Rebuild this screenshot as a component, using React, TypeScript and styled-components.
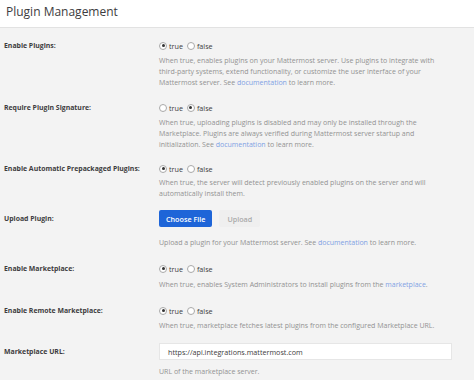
import React from "react";
import styled, { createGlobalStyle } from "styled-components";

const GlobalStyle = createGlobalStyle`
  html, body {
    margin: 0;
    padding: 0;
    background: #f3f3f3;
    font-family: "Open Sans", "Noto Sans", sans-serif;
  }
  * { box-sizing: border-box; }
`;

const Page = styled.div`
  width: 474px;
  height: 380px;
  overflow: hidden;
  background: #f3f3f3;
`;

const Header = styled.div`
  height: 28px;
  background: #ffffff;
  border-bottom: 1px solid #e2e2e2;
  padding: 3px 0 0 6px;
  font-size: 12px;
  line-height: 18px;
  color: #3d3c40;
`;

const Body = styled.div`
  padding: 12px 0 0 4px;
`;

const Row = styled.div<{ $gap: number }>`
  display: grid;
  grid-template-columns: 155px 293px;
  margin-bottom: ${(p) => p.$gap}px;
`;

const Label = styled.div<{ $h: number }>`
  display: flex;
  align-items: center;
  height: ${(p) => p.$h}px;
  font-size: 6.9px;
  font-weight: 700;
  color: #3d3c40;
`;

const Control = styled.div``;

const RadioLine = styled.div`
  display: flex;
  align-items: center;
  height: 11px;
  font-size: 7.2px;
  color: #3d3c40;
`;

const RadioOption = styled.span`
  display: inline-flex;
  align-items: center;
  margin-right: 4px;
`;

const Circle = styled.span<{ $on: boolean }>`
  position: relative;
  width: 8px;
  height: 8px;
  border-radius: 50%;
  border: 1px solid #a9a9a9;
  background: #ffffff;
  margin-right: 2px;

  &::after {
    content: "";
    display: ${(p) => (p.$on ? "block" : "none")};
    position: absolute;
    left: 1.5px;
    top: 1.5px;
    width: 3px;
    height: 3px;
    border-radius: 50%;
    background: #333;
  }
`;

const Help = styled.div<{ $top: number }>`
  margin-top: ${(p) => p.$top}px;
  font-size: 7px;
  line-height: 11px;
  color: #929292;
`;

const Link = styled.a`
  color: #7fa1e3;
  text-decoration: none;
`;

const Buttons = styled.div`
  display: flex;
  gap: 7px;
  height: 17px;
`;

const Button = styled.button<{ $primary?: boolean }>`
  height: 17px;
  padding: 0 ${(p) => (p.$primary ? 7 : 8)}px;
  border: none;
  border-radius: 2px;
  font-family: inherit;
  font-size: 7.2px;
  font-weight: 600;
  color: ${(p) => (p.$primary ? "#ffffff" : "#aaaaaa")};
  background: ${(p) => (p.$primary ? "#1e65d8" : "#efefef")};
`;

const Input = styled.div`
  height: 17px;
  width: 293px;
  background: #ffffff;
  border: 1px solid #e6e6e6;
  padding: 0 8px;
  display: flex;
  align-items: center;
  font-size: 7.2px;
  color: #3d3c40;
`;

const Radios = ({ value }: { value: boolean }) => (
  <RadioLine>
    <RadioOption>
      <Circle $on={value} />
      true
    </RadioOption>
    <RadioOption>
      <Circle $on={!value} />
      false
    </RadioOption>
  </RadioLine>
);

export default function App() {
  return (
    <Page>
      <GlobalStyle />
      <Header>Plugin Management</Header>
      <Body>
        <Row $gap={14}>
          <Label $h={11}>Enable Plugins:</Label>
          <Control>
            <Radios value={true} />
            <Help $top={4}>
              When true, enables plugins on your Mattermost server. Use plugins to integrate with
              third-party systems, extend functionality, or customize the user interface of your
              Mattermost server. See <Link>documentation</Link> to learn more.
            </Help>
          </Control>
        </Row>
        <Row $gap={13}>
          <Label $h={11}>Require Plugin Signature:</Label>
          <Control>
            <Radios value={false} />
            <Help $top={4}>
              When true, uploading plugins is disabled and may only be installed through the
              Marketplace. Plugins are always verified during Mattermost server startup and
              initialization. See <Link>documentation</Link> to learn more.
            </Help>
          </Control>
        </Row>
        <Row $gap={11}>
          <Label $h={11}>Enable Automatic Prepackaged Plugins:</Label>
          <Control>
            <Radios value={true} />
            <Help $top={3}>
              When true, the server will detect previously enabled plugins on the server and will
              automatically install them.
            </Help>
          </Control>
        </Row>
        <Row $gap={15}>
          <Label $h={17}>Upload Plugin:</Label>
          <Control>
            <Buttons>
              <Button $primary>Choose File</Button>
              <Button>Upload</Button>
            </Buttons>
            <Help $top={10}>
              Upload a plugin for your Mattermost server. See <Link>documentation</Link> to learn
              more.
            </Help>
          </Control>
        </Row>
        <Row $gap={15}>
          <Label $h={11}>Enable Marketplace:</Label>
          <Control>
            <Radios value={true} />
            <Help $top={5}>
              When true, enables System Administrators to install plugins from the{" "}
              <Link>marketplace</Link>.
            </Help>
          </Control>
        </Row>
        <Row $gap={12}>
          <Label $h={11}>Enable Remote Marketplace:</Label>
          <Control>
            <Radios value={true} />
            <Help $top={4}>
              When true, marketplace fetches latest plugins from the configured Marketplace URL.
            </Help>
          </Control>
        </Row>
        <Row $gap={0}>
          <Label $h={17}>Marketplace URL:</Label>
          <Control>
            <Input>https://api.integrations.mattermost.com</Input>
            <Help $top={6}>URL of the marketplace server.</Help>
          </Control>
        </Row>
      </Body>
    </Page>
  );
}
